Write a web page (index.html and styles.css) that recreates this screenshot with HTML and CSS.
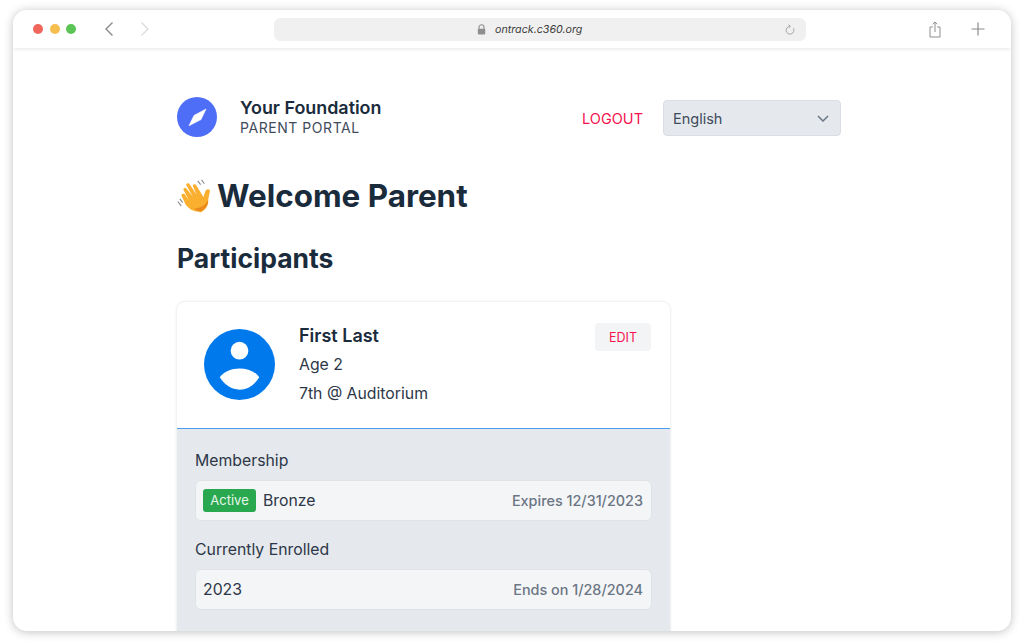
FILE: index.html
```html
<!DOCTYPE html>
<html lang="en">
<head>
    <meta charset="UTF-8">
    <meta name="viewport" content="width=device-width, initial-scale=1.0">
    <title>Parent Portal</title>
    <link rel="stylesheet" href="styles.css">
</head>
<body>
    <div class="window">
        <div class="toolbar">
            <div class="lights">
                <span class="light red"></span>
                <span class="light yellow"></span>
                <span class="light green"></span>
            </div>
            <div class="nav-arrows">
                <svg width="12" height="16" viewBox="0 0 12 16" fill="none" stroke="#8a8a8a" stroke-width="1.4"><path d="M9.5 1.5 3 8l6.5 6.5"/></svg>
                <svg width="12" height="16" viewBox="0 0 12 16" fill="none" stroke="#dcdcdc" stroke-width="1.4"><path d="M2.5 1.5 9 8l-6.5 6.5"/></svg>
            </div>
            <div class="address">
                <svg class="lock" width="9" height="11" viewBox="0 0 9 11"><path d="M2 5V3.3a2.5 2.5 0 0 1 5 0V5" fill="none" stroke="#8e8e8e" stroke-width="1.1"/><rect x="0.8" y="4.8" width="7.4" height="5.7" rx="1" fill="#8e8e8e"/></svg>
                <span class="url">ontrack.c360.org</span>
                <svg class="reload" width="10" height="11" viewBox="0 0 10 11" fill="none" stroke="#a0a0a0" stroke-width="0.9"><path d="M5 2.3a3.9 3.9 0 1 0 3.4 2"/><path d="M3.6 0.6 5.4 2.3 3.6 4"/></svg>
            </div>
            <div class="tool-icons">
                <svg width="12" height="17" viewBox="0 0 12 17" fill="none" stroke="#8f8f8f" stroke-width="1"><path d="M3.8 6H1v10h10V6H8.2"/><path d="M6 11V1M3.7 3.2 6 1l2.3 2.200"/></svg>
                <svg width="14" height="14" viewBox="0 0 14 14" fill="none" stroke="#8a8a8a" stroke-width="1.2"><path d="M7 0.5v13M0.5 7h13"/></svg>
            </div>
        </div>
        <div class="page">
            <header class="site-header">
                <svg class="logo" width="40" height="40" viewBox="0 0 40 40"><circle cx="20" cy="20" r="20" fill="#4f6ef7"/><path d="M29 12 24 22.600 12 28.700 17 18.400Z" fill="#fff" stroke="#fff" stroke-width="0.6" stroke-linejoin="round"/></svg>
                <div class="brand">
                    <div class="brand-name">Your Foundation</div>
                    <div class="brand-sub">PARENT PORTAL</div>
                </div>
                <a class="logout" href="#">LOGOUT</a>
                <div class="lang-select">
                    <span>English</span>
                    <svg width="12" height="7" viewBox="0 0 12 7" fill="none" stroke="#6b7684" stroke-width="1.5"><path d="M1 1l5 5 5-5"/></svg>
                </div>
            </header>

            <h1 class="welcome">
                <svg class="wave" width="34" height="34" viewBox="0 0 36 34">
                    <path d="M3 20l3 4M1 23l3.5 4.5M22 1l3 4M26 0l3 4" fill="none" stroke="#8d8d8d" stroke-width="1.2"/>
                    <path d="M24 33.5C17 34 12 30 9 26L5 17c-1-2 1-3 3-2l5 7L7 11c-1-2 1-3 3-2l7 9L10 6c-1-2 1-3 3-2l8 12-4-9c-1-2 1-3 3-2l8 13 2-6c1-3 5-3 5 0-1 4-2 8-2 11 0 5-4 10-9 11.5Z" fill="#fab02e"/>
                    <path d="M24 33.5c5-1.500 9-6.500 9-11.500l-1 0c-2 5-7 8-14 8 2 2 3.500 3.500 6 3.500Z" fill="#ea8a1c"/>
                </svg>
                Welcome Parent
            </h1>
            <h2 class="section-title">Participants</h2>

            <div class="card">
                <div class="card-top">
                    <svg class="avatar" width="71" height="71" viewBox="0 0 72 72"><circle cx="36" cy="36" r="36" fill="#0079ec"/><circle cx="36" cy="22" r="9" fill="#fff"/><path d="M16 49C20 43 28 40 36 40 44 40 52 43 56 49 51 57 44 61.5 36 61.5 28 61.5 21 57 16 49Z" fill="#fff"/></svg>
                    <div class="person">
                        <div class="person-name">First Last</div>
                        <div class="person-line">Age 2</div>
                        <div class="person-line">7th @ Auditorium</div>
                    </div>
                    <button class="edit-btn">EDIT</button>
                </div>
                <div class="card-body">
                    <div class="field-label">Membership</div>
                    <div class="field-row">
                        <span class="badge">Active</span>
                        <span class="field-value">Bronze</span>
                        <span class="field-note">Expires 12/31/2023</span>
                    </div>
                    <div class="field-label">Currently Enrolled</div>
                    <div class="field-row">
                        <span class="field-value">2023</span>
                        <span class="field-note">Ends on 1/28/2024</span>
                    </div>
                    <div class="field-label">Past Enrollments</div>
                </div>
            </div>
        </div>
    </div>
</body>
</html>
```

FILE: styles.css
```css
html, body {
    margin: 0;
    height: 644px;
    overflow: hidden;
    background-color: #fff;
}
body {
    padding: 10px 13px 13px;
    box-sizing: border-box;
    font-family: Inter, "Liberation Sans", sans-serif;
    color: #2d3748;
}
.window {
    height: 621px;
    background-color: #fff;
    border-radius: 14px;
    box-shadow: 0 1px 10px rgba(0, 0, 0, 0.25);
    overflow: hidden;
    display: flex;
    flex-direction: column;
}
.toolbar {
    height: 38px;
    flex: none;
    display: flex;
    align-items: center;
    position: relative;
    box-shadow: 0 1px 4px rgba(0, 0, 0, 0.1);
}
.lights {
    display: flex;
    gap: 6.5px;
    margin-left: 20px;
    width: 62px;
}
.light {
    width: 10px;
    height: 10px;
    border-radius: 50%;
}
.red { background-color: #f1665a; }
.yellow { background-color: #f6bd4f; }
.green { background-color: #5ac454; }
.nav-arrows {
    display: flex;
    gap: 24px;
    width: 48px;
    margin-left: 8px;
}
.address {
    width: 532px;
    height: 23px;
    margin-left: 123px;
    background-color: #f0f0f0;
    border-radius: 6px;
    display: flex;
    align-items: center;
    padding-left: 203px;
    box-sizing: border-box;
}
.url {
    font-size: 10.7px;
    font-style: italic;
    color: #3c3c3c;
    margin-left: 9px;
}
.reload {
    margin-left: 203px;
}
.tool-icons {
    display: flex;
    align-items: center;
    gap: 30px;
    margin-left: 123px;
}
.page {
    flex: 1;
    padding: 50px 170px 0 164px;
    min-height: 0;
}
.site-header {
    display: flex;
    align-items: center;
    height: 40px;
}
.logo {
    margin-bottom: 2px;
}
.brand {
    margin-left: 23px;
    flex: 1;
}
.brand-name {
    font-size: 17.9px;
    line-height: 20px;
    font-weight: 600;
    color: #1a2b3c;
}
.brand-sub {
    font-size: 14px;
    line-height: 20px;
    letter-spacing: 0.55px;
    color: #3f4c5c;
}
.logout {
    font-size: 14.5px;
    color: #f5134f;
    text-decoration: none;
    margin-right: 20px;
}
.lang-select {
    width: 178px;
    height: 36px;
    box-sizing: border-box;
    padding: 0 11px 0 9px;
    background-color: #e5e8ec;
    border: 1px solid #d9dee4;
    border-radius: 4px;
    display: flex;
    align-items: center;
    justify-content: space-between;
    font-size: 14.5px;
    color: #3f4c5c;
}
.welcome {
    margin: 38px 0 0;
    display: flex;
    align-items: center;
    gap: 6px;
    font-size: 31.4px;
    line-height: 40px;
    font-weight: 700;
    color: #1a2b3c;
}
.section-title {
    margin: 24px 0 0;
    font-size: 26.5px;
    line-height: 36px;
    font-weight: 700;
    color: #1a2b3c;
}
.card {
    width: 493px;
    margin-top: 26px;
    background-color: #fff;
    border-radius: 8px 8px 0 0;
    box-shadow: 0 0 3px rgba(0, 0, 0, 0.14);
}
.card-top {
    height: 127px;
    box-sizing: border-box;
    padding: 21px 19px 0 27px;
    display: flex;
    align-items: flex-start;
    border-bottom: 1px solid #4a9df0;
}
.avatar {
    margin-top: 6px;
    flex: none;
}
.person {
    margin-left: 24px;
    flex: 1;
    margin-top: 1px;
}
.person-name {
    font-size: 18px;
    line-height: 24px;
    font-weight: 600;
    color: #1a2b3c;
    margin-bottom: 5px;
}
.person-line {
    font-size: 15.8px;
    line-height: 24px;
    margin-bottom: 5px;
}
.edit-btn {
    width: 56px;
    height: 28px;
    padding: 0;
    border: none;
    border-radius: 4px;
    background-color: #f3f4f6;
    color: #f5134f;
    font-family: inherit;
    font-size: 12.5px;
}
.card-body {
    background-color: #e5e8ec;
    padding: 20px 18px 0;
    box-sizing: border-box;
}
.field-label {
    font-size: 15.8px;
    line-height: 24px;
    margin-bottom: 7px;
}
.field-row {
    height: 41px;
    box-sizing: border-box;
    margin-bottom: 17px;
    padding: 0 8px 0 7px;
    background-color: #f4f5f7;
    border: 1px solid #dfe3e8;
    border-radius: 6px;
    display: flex;
    align-items: center;
}
.badge {
    width: 53px;
    height: 23px;
    margin-right: 7px;
    border-radius: 3px;
    background-color: #2aa84f;
    color: #e6f6ea;
    font-size: 13px;
    line-height: 23px;
    text-align: center;
}
.field-value {
    font-size: 15.8px;
    flex: 1;
}
.field-note {
    font-size: 14.4px;
    font-weight: 500;
    color: #6b7684;
}
```
